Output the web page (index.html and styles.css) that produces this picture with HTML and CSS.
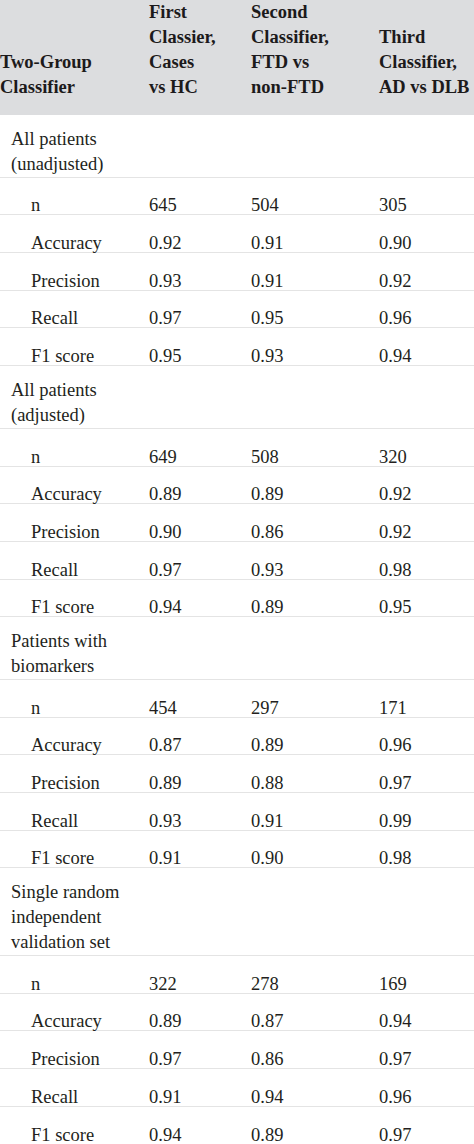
FILE: index.html
```html
<!DOCTYPE html>
<html lang="en">
<head>
<meta charset="utf-8">
<title>Two-Group Classifier</title>
<link rel="stylesheet" href="styles.css">
</head>
<body>
<div class="table">
  <div class="row head">
    <div class="cell">Two-Group<br>Classifier</div>
    <div class="cell">First<br>Classier,<br>Cases<br>vs HC</div>
    <div class="cell">Second<br>Classifier,<br>FTD vs<br>non-FTD</div>
    <div class="cell">Third<br>Classifier,<br>AD vs DLB</div>
  </div>

  <div class="row group"><div class="label">All patients<br>(unadjusted)</div></div>
  <div class="row data"><div class="metric">n</div><div>645</div><div>504</div><div>305</div></div>
  <div class="row data"><div class="metric">Accuracy</div><div>0.92</div><div>0.91</div><div>0.90</div></div>
  <div class="row data"><div class="metric">Precision</div><div>0.93</div><div>0.91</div><div>0.92</div></div>
  <div class="row data"><div class="metric">Recall</div><div>0.97</div><div>0.95</div><div>0.96</div></div>
  <div class="row data"><div class="metric">F1 score</div><div>0.95</div><div>0.93</div><div>0.94</div></div>

  <div class="row group"><div class="label">All patients<br>(adjusted)</div></div>
  <div class="row data"><div class="metric">n</div><div>649</div><div>508</div><div>320</div></div>
  <div class="row data"><div class="metric">Accuracy</div><div>0.89</div><div>0.89</div><div>0.92</div></div>
  <div class="row data"><div class="metric">Precision</div><div>0.90</div><div>0.86</div><div>0.92</div></div>
  <div class="row data"><div class="metric">Recall</div><div>0.97</div><div>0.93</div><div>0.98</div></div>
  <div class="row data"><div class="metric">F1 score</div><div>0.94</div><div>0.89</div><div>0.95</div></div>

  <div class="row group"><div class="label">Patients with<br>biomarkers</div></div>
  <div class="row data"><div class="metric">n</div><div>454</div><div>297</div><div>171</div></div>
  <div class="row data"><div class="metric">Accuracy</div><div>0.87</div><div>0.89</div><div>0.96</div></div>
  <div class="row data"><div class="metric">Precision</div><div>0.89</div><div>0.88</div><div>0.97</div></div>
  <div class="row data"><div class="metric">Recall</div><div>0.93</div><div>0.91</div><div>0.99</div></div>
  <div class="row data"><div class="metric">F1 score</div><div>0.91</div><div>0.90</div><div>0.98</div></div>

  <div class="row group"><div class="label">Single random<br>independent<br>validation set</div></div>
  <div class="row data"><div class="metric">n</div><div>322</div><div>278</div><div>169</div></div>
  <div class="row data"><div class="metric">Accuracy</div><div>0.89</div><div>0.87</div><div>0.94</div></div>
  <div class="row data"><div class="metric">Precision</div><div>0.97</div><div>0.86</div><div>0.97</div></div>
  <div class="row data"><div class="metric">Recall</div><div>0.91</div><div>0.94</div><div>0.96</div></div>
  <div class="row data"><div class="metric">F1 score</div><div>0.94</div><div>0.89</div><div>0.97</div></div>
</div>
</body>
</html>
```
FILE: styles.css
```css
html, body {
  margin: 0;
  padding: 0;
  background: #ffffff;
}

body {
  width: 474px;
  overflow: hidden;
  font-family: "Liberation Serif", "Times New Roman", serif;
  font-size: 18.5px;
  color: #231f20;
}

.table {
  width: 474px;
}

.row {
  display: grid;
  grid-template-columns: 149px 102px 128px 1fr;
  align-items: end;
  box-sizing: border-box;
  white-space: nowrap;
}

.head {
  height: 115px;
  padding-bottom: 17.6px;
  background: #dcdddf;
  font-weight: bold;
  line-height: 25px;
  color: #1c1a1b;
}

.group {
  padding-top: 11.7px;
  line-height: 25px;
  border-bottom: 1px solid #e4e4e4;
}

.group .label {
  grid-column: 1 / -1;
  padding-left: 11px;
}

.data {
  height: 37.7px;
  line-height: 18px;
  border-bottom: 1px solid #e4e4e4;
}

.metric {
  padding-left: 31px;
}
```
